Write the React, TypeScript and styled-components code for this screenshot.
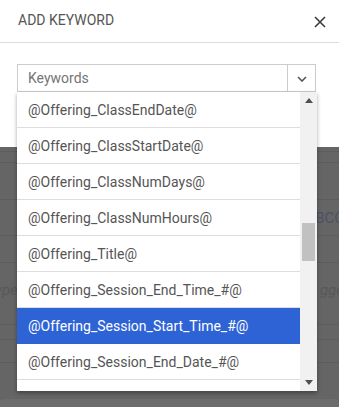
import React from 'react';
import styled, { createGlobalStyle } from 'styled-components';

const keywords = [
  '@Offering_ClassEndDate@',
  '@Offering_ClassStartDate@',
  '@Offering_ClassNumDays@',
  '@Offering_ClassNumHours@',
  '@Offering_Title@',
  '@Offering_Session_End_Time_#@',
  '@Offering_Session_Start_Time_#@',
  '@Offering_Session_End_Date_#@',
  '@Offering_Session_Start_Date_#@',
];

const selectedKeyword = '@Offering_Session_Start_Time_#@';

const GlobalStyle = createGlobalStyle`
  html, body {
    margin: 0;
    padding: 0;
    background: #ffffff;
  }
  body {
    font-family: Roboto, 'Liberation Sans', Arial, sans-serif;
  }
`;

const App: React.FC = () => {
  return (
    <Screen>
      <GlobalStyle />
      <Modal>
        <Header>
          <Title>ADD KEYWORD</Title>
          <CloseButton aria-label='close'>
            <svg width='12' height='12' viewBox='0 0 12 12'>
              <path d='M1 1 L11 11 M11 1 L1 11' stroke='#3c3c3c' strokeWidth='1.6' fill='none' />
            </svg>
          </CloseButton>
        </Header>
        <Body>
          <Select>
            <Placeholder>Keywords</Placeholder>
            <ArrowBox>
              <svg width='10' height='6' viewBox='0 0 10 6'>
                <path d='M1 1 L5 5 L9 1' stroke='#555' strokeWidth='1.6' fill='none' />
              </svg>
            </ArrowBox>
          </Select>
        </Body>
      </Modal>

      {/* page behind the modal, dimmed */}
      <Backdrop>
        <BackRow $height={5} />
        <BackRow $height={11} />
        <BackRow $height={37} />
        <BackRow $height={36}>
          <BackText $side='right' $color='#4b5263'>BCC</BackText>
        </BackRow>
        <BackRow $height={27} />
        <BackRow $height={62} $padBottom={8}>
          <BackText $side='left' $italic>ype</BackText>
          <BackText $side='right' $italic>gge</BackText>
        </BackRow>
        <BackRow $height={15} />
        <BackRow $height={23} />
        <BottomBand />
      </Backdrop>

      <Dropdown>
        <List>
          {keywords.map((k) => (
            <Item key={k} $active={k === selectedKeyword}>
              {k}
            </Item>
          ))}
        </List>
        <ScrollTrack>
          <ScrollArrow>
            <svg width='8' height='5' viewBox='0 0 8 5'>
              <path d='M0 5 L4 0 L8 5 Z' fill='#505050' />
            </svg>
          </ScrollArrow>
          <ThumbArea>
            <Thumb />
          </ThumbArea>
          <ScrollArrow>
            <svg width='8' height='5' viewBox='0 0 8 5'>
              <path d='M0 0 L8 0 L4 5 Z' fill='#505050' />
            </svg>
          </ScrollArrow>
        </ScrollTrack>
      </Dropdown>
    </Screen>
  );
};

export default App;

const Screen = styled.div`
  position: relative;
  width: 339px;
  height: 407px;
  overflow: hidden;
  display: flex;
  flex-direction: column;
  background: #656565;
`;

const Modal = styled.div`
  background: #ffffff;
  height: 147px;
  flex-shrink: 0;
`;

const Header = styled.div`
  height: 43px;
  box-sizing: border-box;
  border-bottom: 1px solid #dcdcdc;
  display: flex;
  align-items: center;
  justify-content: space-between;
  padding: 0 10px 3px 18px;
`;

const Title = styled.h1`
  margin: 0;
  font-size: 14px;
  font-weight: 400;
  color: #555555;
`;

const CloseButton = styled.button`
  border: none;
  background: none;
  padding: 3px;
  margin-top: 4px;
  display: flex;
  cursor: pointer;
`;

const Body = styled.div`
  padding: 21px 23px 0 17px;
`;

const Select = styled.div`
  height: 28px;
  box-sizing: border-box;
  border: 1px solid #cccccc;
  display: flex;
  align-items: stretch;
`;

const Placeholder = styled.span`
  flex: 1;
  display: flex;
  align-items: center;
  padding-left: 10px;
  font-size: 14px;
  color: #757575;
`;

const ArrowBox = styled.span`
  width: 27px;
  border-left: 1px solid #cccccc;
  display: flex;
  align-items: center;
  justify-content: center;
  padding-top: 1px;
`;

const Backdrop = styled.div`
  flex: 1;
  display: flex;
  flex-direction: column;
`;

const BackRow = styled.div<{ $height: number; $padBottom?: number }>`
  height: ${(p) => p.$height}px;
  box-sizing: border-box;
  padding-bottom: ${(p) => p.$padBottom || 0}px;
  border-bottom: 1px solid #5d5d5d;
  display: flex;
  align-items: center;
  justify-content: space-between;
  overflow: hidden;
`;

const BackText = styled.span<{ $side: 'left' | 'right'; $italic?: boolean; $color?: string }>`
  font-size: 15px;
  font-style: ${(p) => (p.$italic ? 'italic' : 'normal')};
  color: ${(p) => p.$color || '#585858'};
  margin-left: ${(p) => (p.$side === 'left' ? '-5px' : 'auto')};
  margin-right: ${(p) => (p.$side === 'right' ? '-5px' : '0')};
`;

const BottomBand = styled.div`
  margin-top: auto;
  height: 8px;
  background: #6c6c6c;
  border-radius: 4px 4px 0 0;
`;

const Dropdown = styled.div`
  position: absolute;
  top: 92px;
  left: 17px;
  width: 300px;
  height: 299px;
  background: #ffffff;
  display: flex;
  box-shadow: 0 2px 4px rgba(0, 0, 0, 0.35);
  overflow: hidden;
`;

const List = styled.ul`
  flex: 1;
  margin: 0;
  padding: 0;
  list-style: none;
  overflow: hidden;
`;

const Item = styled.li<{ $active: boolean }>`
  height: 36px;
  box-sizing: border-box;
  display: flex;
  align-items: center;
  padding-left: 11px;
  font-size: 14px;
  white-space: nowrap;
  color: ${(p) => (p.$active ? '#ffffff' : '#555555')};
  background: ${(p) => (p.$active ? '#2e63d6' : '#ffffff')};
  border-bottom: 1px solid ${(p) => (p.$active ? '#2e63d6' : '#dddddd')};
`;

const ScrollTrack = styled.div`
  width: 17px;
  background: #f1f1f1;
  display: flex;
  flex-direction: column;
`;

const ScrollArrow = styled.div`
  height: 17px;
  display: flex;
  align-items: center;
  justify-content: center;
`;

const ThumbArea = styled.div`
  flex: 1;
  padding: 114px 2px 0 2px;
`;

const Thumb = styled.div`
  height: 38px;
  background: #c1c1c1;
`;
